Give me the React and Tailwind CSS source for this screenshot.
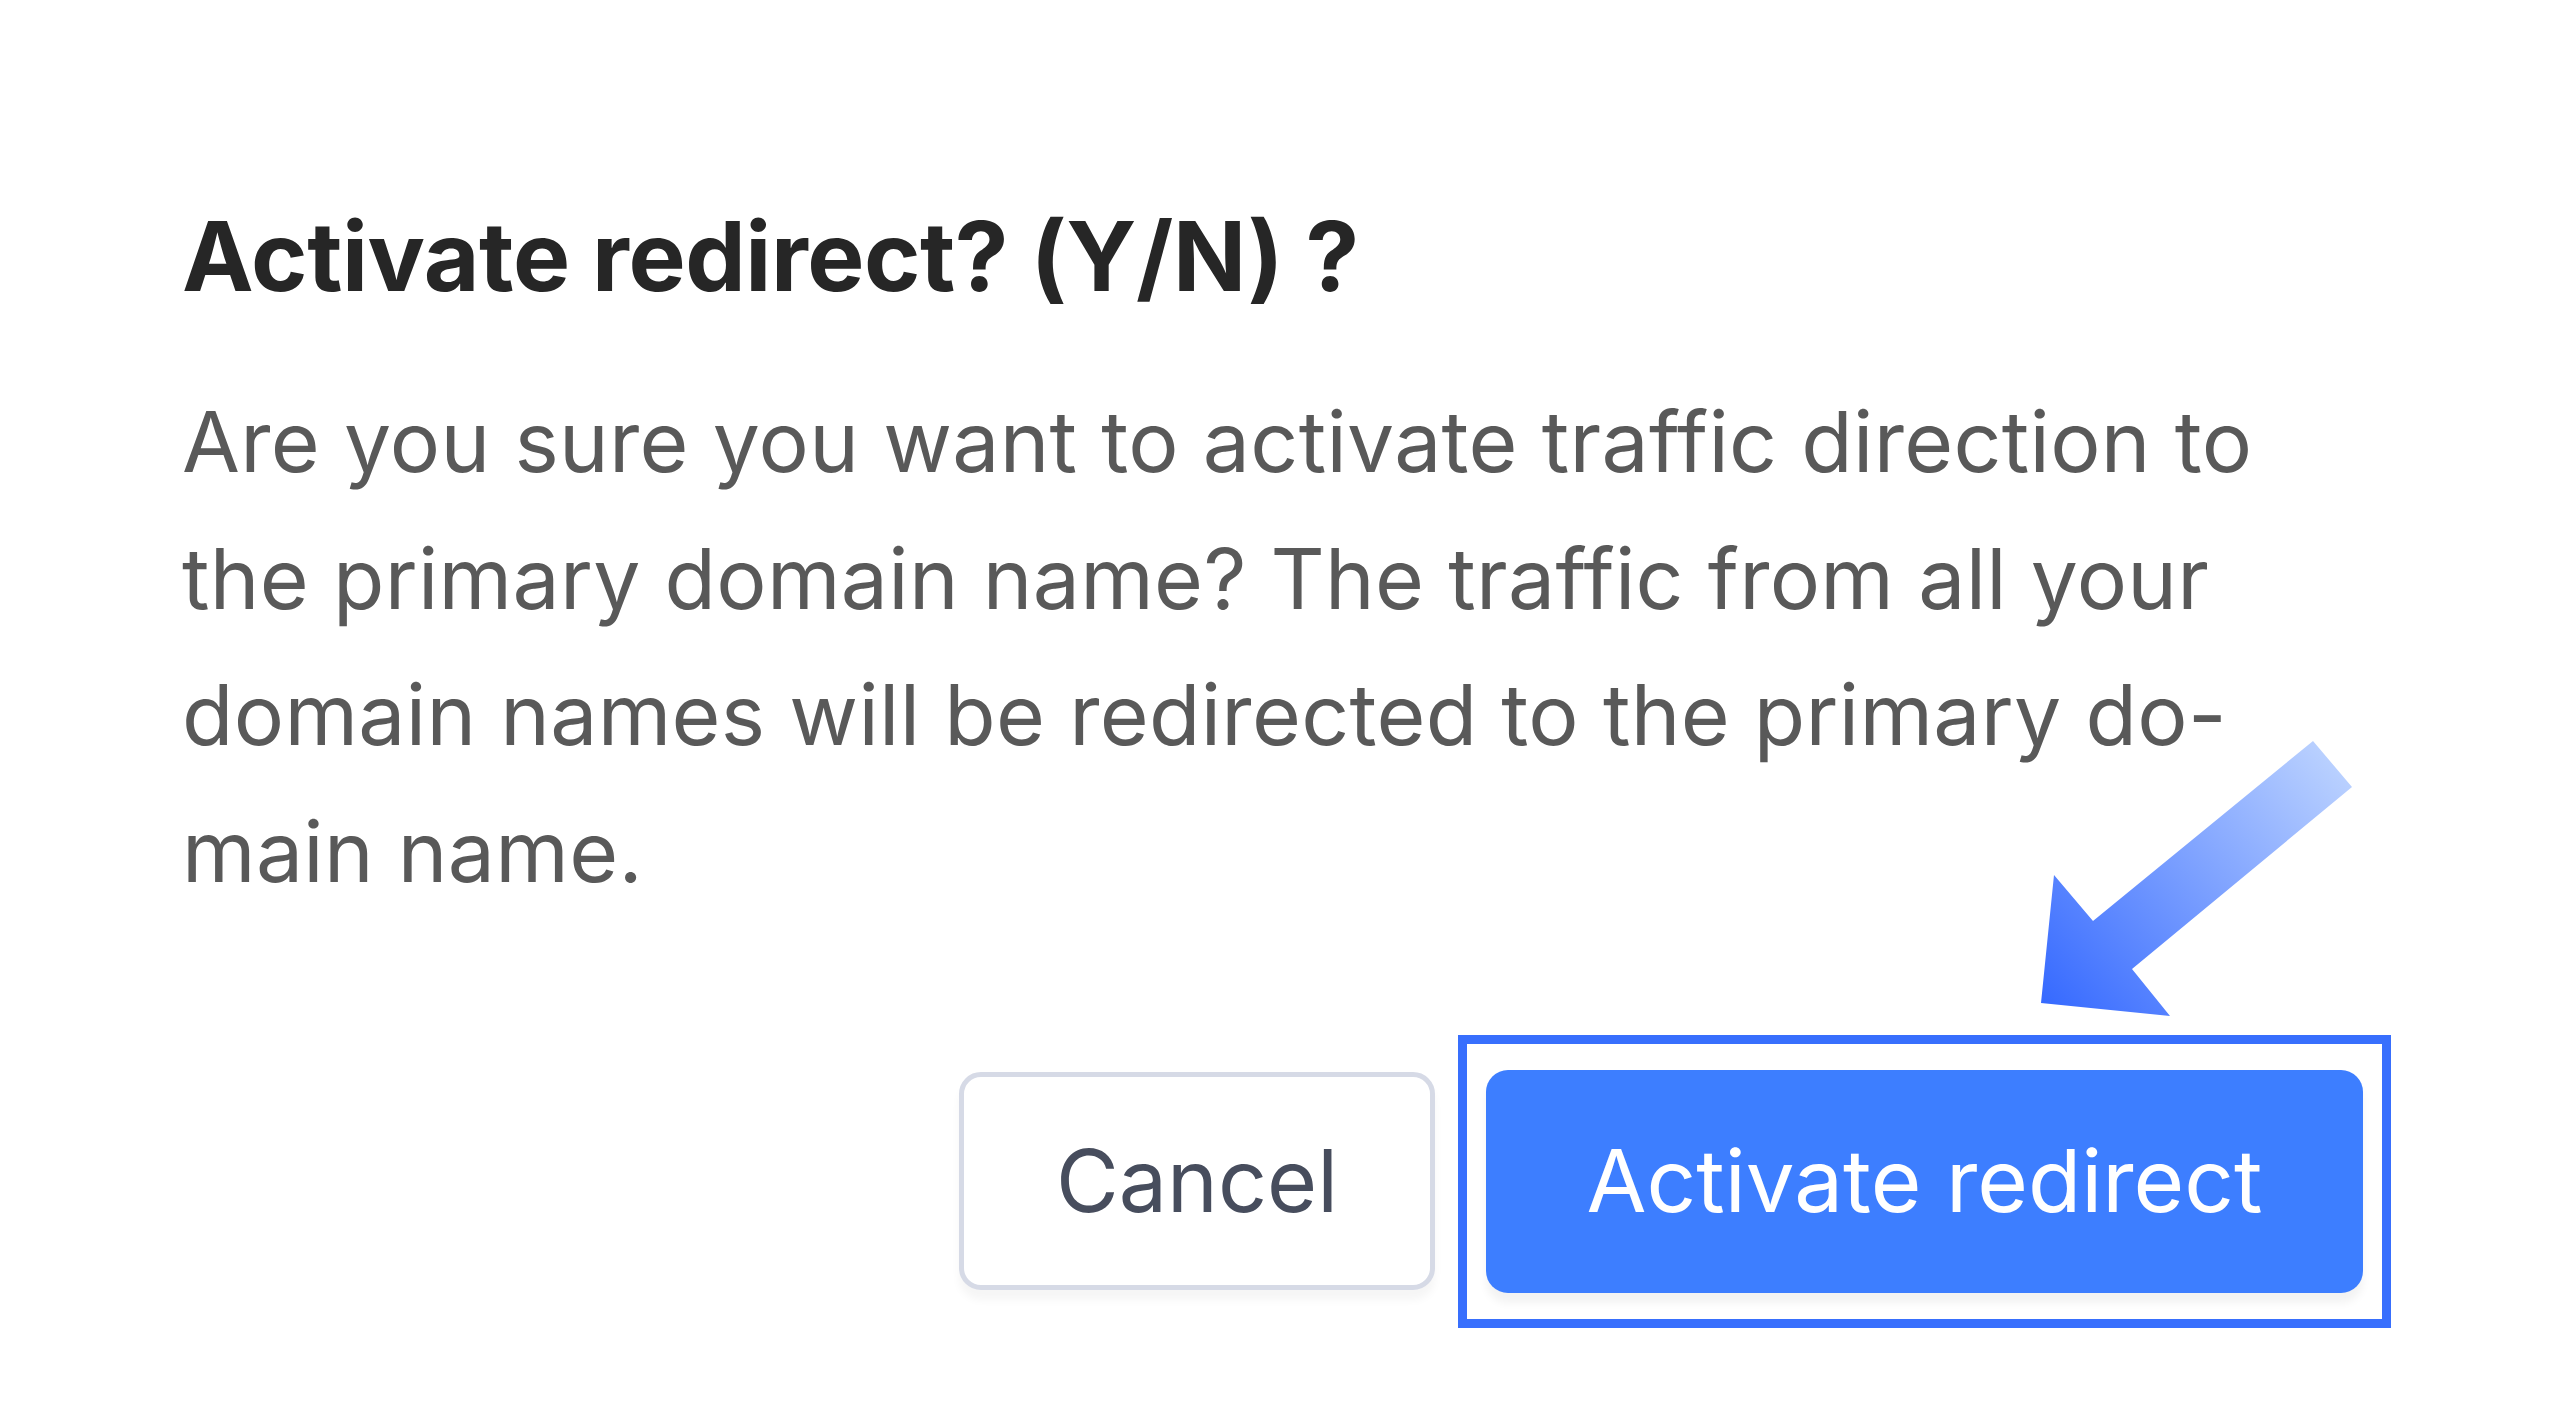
import React from "react";

export default function App() {
  return (
    <div className="relative w-[2550px] h-[1427px] bg-white overflow-hidden" style={{ fontFamily: "Inter, 'Noto Sans', sans-serif" }}>
      <div className="pl-[182px] pr-[159px] pt-[198px]">
        <h1 className="text-[96px] leading-[116px] font-bold text-[#262626] tracking-[-0.4px]">
          Activate redirect? (Y/N) ?
        </h1>
        <p className="mt-[60px] text-[84px] leading-[136.7px] text-[#595959] tracking-[0.3px]">
          Are you sure you want to activate traffic direction to
          <br />
          the primary domain name? The traffic from all your
          <br />
          domain names will be redirected to the primary do-
          <br />
          main name.
        </p>
        <div className="mt-[114px] flex justify-end items-center gap-[23px]">
          <button className="w-[476px] h-[218px] rounded-[22px] border-[5px] border-[#d6dae6] bg-white text-[86px] text-[#474d5d] shadow-[0_10px_8px_rgba(0,0,0,0.04)]">
            Cancel
          </button>
          <div className="border-[9px] border-[#386ffd] px-[19px] pt-[26px] pb-[26px]">
            <button className="w-[877px] h-[223px] rounded-[22px] bg-[#3d7eff] text-[87px] text-white shadow-[0_10px_8px_rgba(0,0,0,0.05)]">
              Activate redirect
            </button>
          </div>
        </div>
      </div>
      <svg className="absolute left-0 top-0 pointer-events-none" width="2550" height="1427" viewBox="0 0 2550 1427">
        <defs>
          <linearGradient id="arrowGrad" x1="2352" y1="741" x2="2041" y2="1010" gradientUnits="userSpaceOnUse">
            <stop offset="0" stopColor="#c3d8ff" />
            <stop offset="1" stopColor="#3468ff" />
          </linearGradient>
        </defs>
        <polygon
          points="2313,741 2352,787 2132,969 2170,1016 2041,1003 2054,875 2093,921"
          fill="url(#arrowGrad)"
        />
      </svg>
    </div>
  );
}
